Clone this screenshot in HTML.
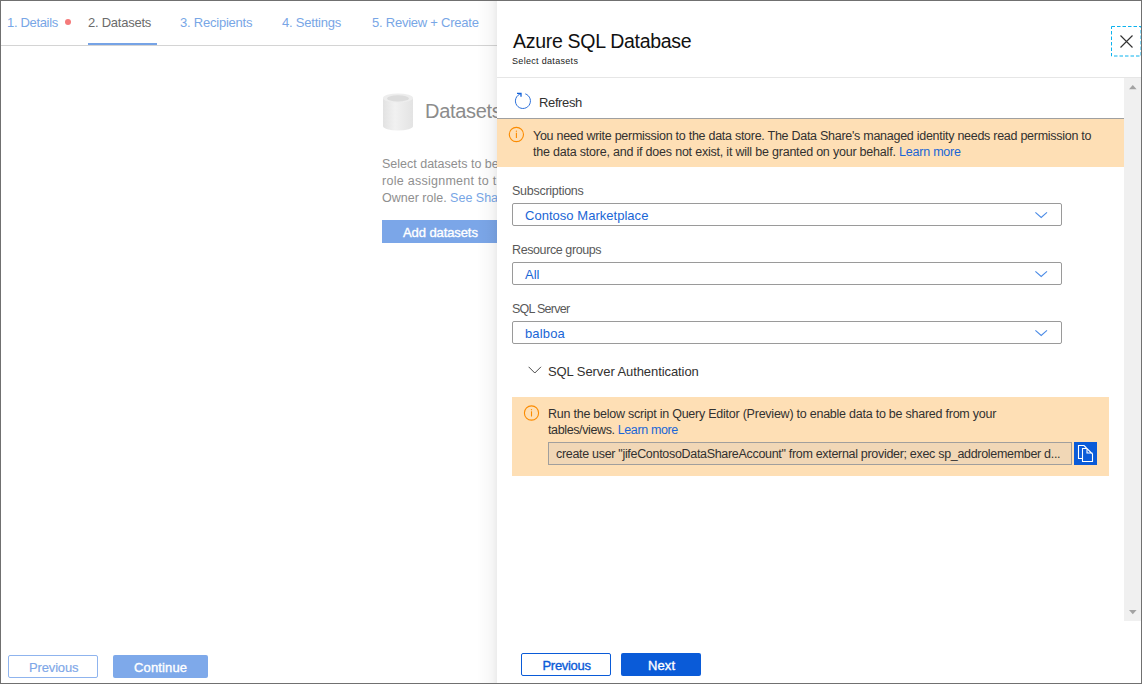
<!DOCTYPE html>
<html><head><meta charset="utf-8">
<style>
*{box-sizing:border-box;margin:0;padding:0}
html,body{width:1142px;height:684px;overflow:hidden;background:#fff;font-family:"Liberation Sans",sans-serif}
#frame{position:absolute;left:0;top:0;width:1142px;height:684px;overflow:hidden;background:#fff}
#border{position:absolute;left:0;top:0;width:1142px;height:684px;border:1px solid #707070;z-index:50}
.t{position:absolute;white-space:nowrap;line-height:16px}
.tab{position:absolute;white-space:nowrap;top:15px;font-size:13px;color:#78a6e6;line-height:16px}
.tabline{position:absolute;left:0;top:45px;width:1142px;height:1px;background:#d4d4d4}
.panel{position:absolute;left:497px;top:0;width:645px;height:684px;background:#fff}
.shadow{position:absolute;left:477px;top:0;width:20px;height:684px;background:linear-gradient(to right,rgba(0,0,0,0) 0%,rgba(0,0,0,0.02) 50%,rgba(0,0,0,0.045) 80%,rgba(0,0,0,0.075) 100%)}
.lbl{position:absolute;white-space:nowrap;left:15px;font-size:12.5px;color:#595959;line-height:16px}
.dd{position:absolute;left:15px;width:550px;height:23px;border:1px solid #9a9a9a;border-radius:2px;background:#fff}
.dd span{position:absolute;left:12px;top:4px;font-size:13px;color:#1a66d6;line-height:16px;white-space:nowrap}
.dd svg{position:absolute;left:522px;top:7px}
.warn{position:absolute;background:#fedfb5}
.semi{-webkit-text-stroke:0.35px currentColor}
</style></head><body>
<div id="frame">
  <!-- left wizard content -->
  <div class="tab" style="left:7px;letter-spacing:-0.33px">1. Details</div>
  <div class="t" style="left:65px;top:19px;width:6px;height:6px;border-radius:50%;background:#f57a7a"></div>
  <div class="tab" style="left:88px;color:#6b6b6b;letter-spacing:-0.25px">2. Datasets</div>
  <div class="t" style="left:88px;top:43px;width:69px;height:2px;background:#76a3e6"></div>
  <div class="tab" style="left:180px;letter-spacing:-0.22px">3. Recipients</div>
  <div class="tab" style="left:282px;letter-spacing:-0.22px">4. Settings</div>
  <div class="tab" style="left:372px;letter-spacing:-0.235px">5. Review + Create</div>
  <div class="tabline"></div>

  <!-- datasets empty state -->
  <svg class="t" style="left:383px;top:93px" width="30" height="38" viewBox="0 0 30 38">
    <defs><linearGradient id="cyl" x1="0" x2="1"><stop offset="0" stop-color="#e2e2e2"/><stop offset="0.4" stop-color="#f1f1f1"/><stop offset="1" stop-color="#e3e3e3"/></linearGradient></defs>
    <path d="M0 5 L0 33 A15 4.6 0 0 0 30 33 L30 5 Z" fill="url(#cyl)"/>
    <ellipse cx="15" cy="5" rx="15" ry="4.6" fill="#ededed"/>
    <ellipse cx="15" cy="5.4" rx="11" ry="3.1" fill="#dcdcdc"/>
  </svg>
  <div class="t" style="left:425px;top:100px;font-size:20px;line-height:22px;color:#8c8c8c;letter-spacing:-0.3px">Datasets</div>
  <div class="t" style="left:382px;top:156px;font-size:12.5px;line-height:17px;color:#8f8f8f;letter-spacing:0px">Select datasets to be<br><span style="letter-spacing:0.27px">role assignment to t</span><br>Owner role. <span style="color:#78a6e6">See Sha</span></div>
  <div class="t semi" style="left:382px;top:220px;width:120px;height:23px;background:#7ba6e8;color:#fff;font-size:13px;line-height:16px;padding-top:5px;padding-left:21px;letter-spacing:-0.09px">Add datasets</div>

  <div class="t semi" style="left:8px;top:655px;width:90px;height:23px;border:1px solid #8fb4ee;border-radius:2px;color:#7ea7e8;font-size:13px;line-height:16px;padding-top:4px;padding-left:20px;letter-spacing:-0.15px;-webkit-text-stroke:0.15px #7ea7e8">Previous</div>
  <div class="t semi" style="left:113px;top:655px;width:95px;height:23px;border-radius:2px;background:#7ea9ea;color:#fff;font-size:13px;line-height:16px;padding-top:5px;padding-left:21px;letter-spacing:0.14px">Continue</div>

  <div class="shadow"></div>
  <!-- right panel -->
  <div class="panel">
    <div class="t" style="left:16px;top:30px;font-size:19.5px;line-height:22px;color:#111;letter-spacing:-0.29px">Azure SQL Database</div>
    <div class="t" style="left:15px;top:55px;font-size:9px;line-height:12px;color:#1a1a1a;letter-spacing:0.31px">Select datasets</div>
    <svg class="t" style="left:614px;top:26px" width="31" height="31" viewBox="0 0 31 31"><rect x="0.5" y="0.5" width="29.5" height="29.5" fill="none" stroke="#0bb2ee" stroke-width="1" stroke-dasharray="3.5 2"/></svg>
    <svg class="t" style="left:622.5px;top:34.5px" width="13" height="13" viewBox="0 0 13 13"><path d="M0.5 0.5 L12.5 12.5 M12.5 0.5 L0.5 12.5" stroke="#333" stroke-width="1.15"/></svg>
    <div class="t" style="left:0;top:77px;width:645px;height:1px;background:#e6e6e6"></div>
    <!-- scrollbar -->
    <div class="t" style="left:627px;top:78px;width:17px;height:543px;background:#f0f0f0"></div>
    <svg class="t" style="left:632px;top:84.5px" width="8" height="5"><path d="M0 4.3 L3.8 0 L7.6 4.3Z" fill="#a3a3a3"/></svg>
    <svg class="t" style="left:632px;top:610px" width="8" height="5"><path d="M0 0 L3.8 4.3 L7.6 0Z" fill="#a3a3a3"/></svg>

    <!-- refresh -->
    <svg class="t" style="left:13px;top:89px" width="26" height="24" viewBox="0 0 26 24"><path d="M10.9 4.76 A7.5 7.5 0 1 0 15.3 4.87" fill="none" stroke="#2a6fda" stroke-width="1"/><path d="M7 4.3 H11 V7.8" fill="none" stroke="#0f5fd8" stroke-width="1.3"/></svg>
    <div class="t" style="left:42px;top:95px;font-size:13px;color:#323130;letter-spacing:-0.37px">Refresh</div>

    <!-- warning 1 -->
    <div class="warn" style="left:0;top:118px;width:627px;height:49px;border-top:1px solid #a0a0a0"></div>
    <svg class="t" style="left:11px;top:126px" width="17" height="17" viewBox="0 0 17 17"><circle cx="8.4" cy="8.5" r="7.1" fill="none" stroke="#fb8b00" stroke-width="1.1"/><path d="M8.4 6.8 V12" stroke="#fb8b00" stroke-width="1.1"/><circle cx="8.4" cy="5.2" r="0.65" fill="#fb8b00"/></svg>
    <div class="t" style="left:36px;top:128px;font-size:12.5px;line-height:16px;color:#323130;letter-spacing:-0.27px">You need write permission to the data store. The Data Share's managed identity needs read permission to</div>
    <div class="t" style="left:36px;top:144px;font-size:12.5px;line-height:16px;color:#323130;letter-spacing:-0.21px">the data store, and if does not exist, it will be granted on your behalf. <span style="color:#1a66d6">Learn more</span></div>

    <div class="lbl" style="top:183px;letter-spacing:-0.27px">Subscriptions</div>
    <div class="dd" style="top:203px"><span style="letter-spacing:0.03px">Contoso Marketplace</span><svg width="13" height="8"><path d="M0.4 1.3 L6.2 6.5 L12 1.3" fill="none" stroke="#4b8be6" stroke-width="1.1"/></svg></div>
    <div class="lbl" style="top:242px;letter-spacing:-0.4px">Resource groups</div>
    <div class="dd" style="top:262px"><span>All</span><svg width="13" height="8"><path d="M0.4 1.3 L6.2 6.5 L12 1.3" fill="none" stroke="#4b8be6" stroke-width="1.1"/></svg></div>
    <div class="lbl" style="top:301px;letter-spacing:-0.75px">SQL Server</div>
    <div class="dd" style="top:321px"><span style="letter-spacing:0.14px">balboa</span><svg width="13" height="8"><path d="M0.4 1.3 L6.2 6.5 L12 1.3" fill="none" stroke="#4b8be6" stroke-width="1.1"/></svg></div>

    <svg class="t" style="left:31px;top:366px" width="14" height="9"><path d="M0.6 0.8 L6.8 7 L13 0.8" fill="none" stroke="#404040" stroke-width="0.95"/></svg>
    <div class="t" style="left:51px;top:364px;font-size:13px;color:#323130;letter-spacing:-0.08px">SQL Server Authentication</div>

    <!-- warning 2 -->
    <div class="warn" style="left:15px;top:397px;width:597px;height:79px"></div>
    <svg class="t" style="left:26px;top:405px" width="17" height="17" viewBox="0 0 17 17"><circle cx="8.5" cy="8" r="7.1" fill="none" stroke="#fb8b00" stroke-width="1.1"/><path d="M8.5 6.3 V11.5" stroke="#fb8b00" stroke-width="1.1"/><circle cx="8.5" cy="4.7" r="0.65" fill="#fb8b00"/></svg>
    <div class="t" style="left:51px;top:406px;font-size:12.5px;line-height:16px;color:#323130;letter-spacing:-0.24px">Run the below script in Query Editor (Preview) to enable data to be shared from your</div>
    <div class="t" style="left:51px;top:422px;font-size:12.5px;line-height:16px;color:#323130;letter-spacing:-0.38px">tables/views. <span style="color:#1a66d6">Learn more</span></div>
    <div class="t" style="left:51px;top:442px;width:524px;height:23px;border:1px solid #a19f9d;background:#f1d7b6"></div>
    <div class="t" style="left:59px;top:446px;font-size:12.5px;line-height:16px;color:#323130;letter-spacing:-0.31px">create user "jifeContosoDataShareAccount" from external provider; exec sp_addrolemember d...</div>
    <div class="t" style="left:577px;top:442px;width:23px;height:23px;background:#0a5bd8"></div>
    <svg class="t" style="left:577px;top:442px" width="23" height="23" viewBox="0 0 23 23"><path d="M8 16.5 H4.5 V3.5 H10 L12.5 6" fill="none" stroke="#fff" stroke-width="1.1"/><path d="M8.5 6.5 H13 L18.5 12 V19.5 H8.5 Z M13 6.5 V11 H18.5" fill="none" stroke="#fff" stroke-width="1.1"/></svg>

    <div class="t semi" style="left:24px;top:653px;width:90px;height:23px;border:1px solid #0a5bd8;border-radius:2px;color:#0a5bd8;font-size:13px;line-height:16px;padding-top:4px;padding-left:20.5px;letter-spacing:-0.3px">Previous</div>
    <div class="t semi" style="left:124px;top:653px;width:80px;height:23px;border-radius:2px;background:#0a5bd8;color:#fff;font-size:13px;line-height:16px;padding-top:5px;padding-left:27px;letter-spacing:0.1px">Next</div>
  </div>
  <div id="border"></div>
</div>
</body></html>
